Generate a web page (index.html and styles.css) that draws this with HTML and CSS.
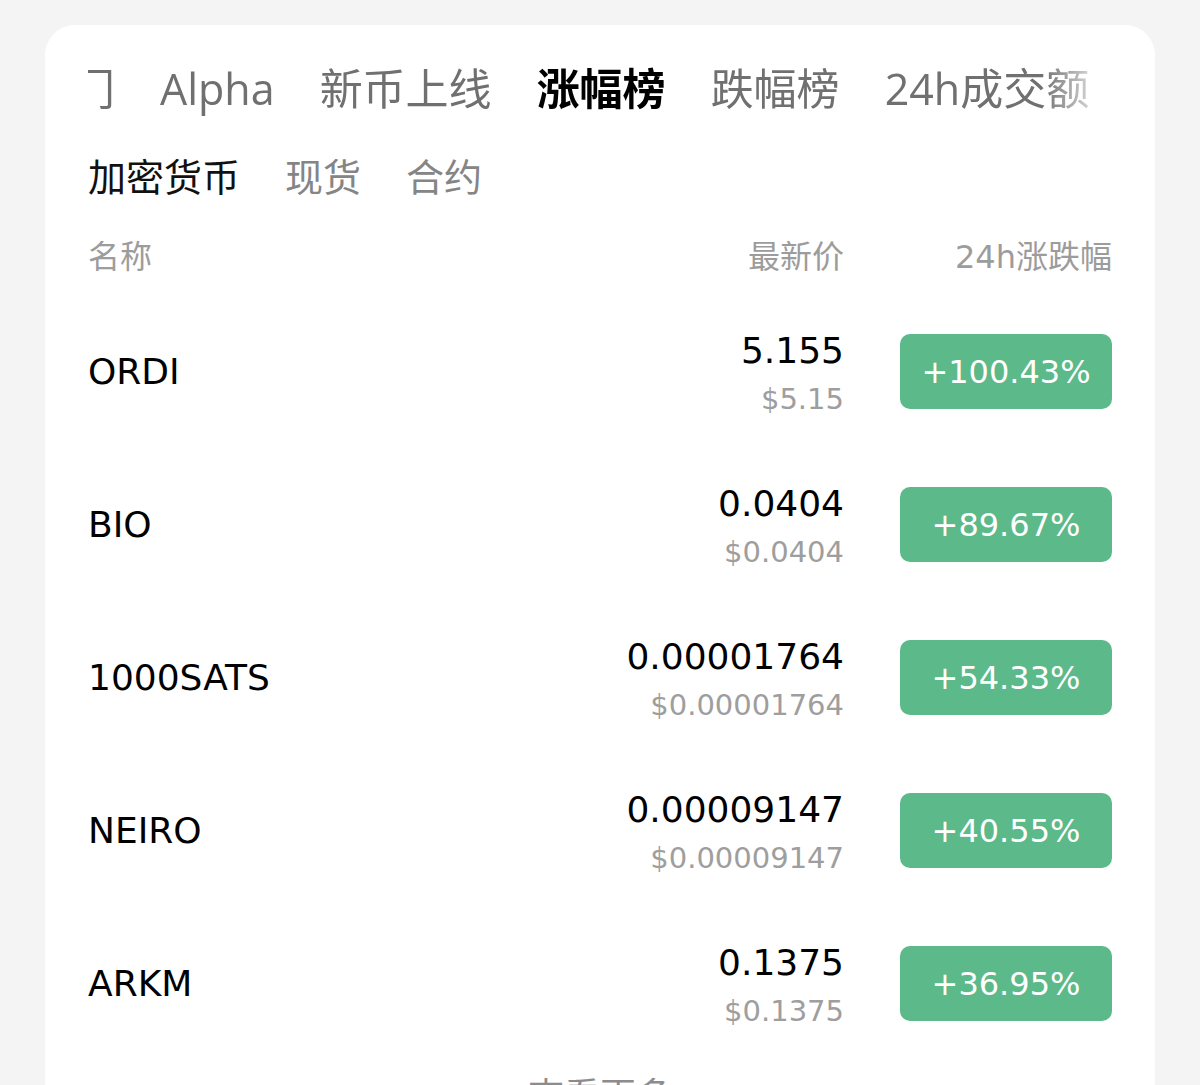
FILE: index.html
```html
<!DOCTYPE html>
<html lang="zh-CN">
<head>
    <meta charset="UTF-8">
    <meta name="viewport" content="width=device-width, initial-scale=1.0">
    <title>涨幅榜</title>
    <link rel="stylesheet" href="styles.css">
</head>
<body>

    <div class="card">
        <!-- 顶部分类 -->
        <div class="tabs">
            <span class="tab tab-scrolled">热门</span>
            <span class="tab">Alpha</span>
            <span class="tab">新币上线</span>
            <span class="tab active">涨幅榜</span>
            <span class="tab">跌幅榜</span>
            <span class="tab">24h成交额</span>
        </div>

        <div class="sub-tabs">
            <span class="sub-tab active">加密货币</span>
            <span class="sub-tab">现货</span>
            <span class="sub-tab">合约</span>
        </div>

        <div class="list-head">
            <span>名称</span>
            <span class="col-price">最新价</span>
            <span class="col-change">24h涨跌幅</span>
        </div>

        <div class="list">
            <div class="row">
                <span class="name">ORDI</span>
                <div class="price">
                    <span class="last">5.155</span>
                    <span class="usd">$5.15</span>
                </div>
                <span class="change">+100.43%</span>
            </div>
            <div class="row">
                <span class="name">BIO</span>
                <div class="price">
                    <span class="last">0.0404</span>
                    <span class="usd">$0.0404</span>
                </div>
                <span class="change">+89.67%</span>
            </div>
            <div class="row">
                <span class="name">1000SATS</span>
                <div class="price">
                    <span class="last">0.00001764</span>
                    <span class="usd">$0.00001764</span>
                </div>
                <span class="change">+54.33%</span>
            </div>
            <div class="row">
                <span class="name">NEIRO</span>
                <div class="price">
                    <span class="last">0.00009147</span>
                    <span class="usd">$0.00009147</span>
                </div>
                <span class="change">+40.55%</span>
            </div>
            <div class="row">
                <span class="name">ARKM</span>
                <div class="price">
                    <span class="last">0.1375</span>
                    <span class="usd">$0.1375</span>
                </div>
                <span class="change">+36.95%</span>
            </div>
        </div>

        <div class="more">查看更多</div>
    </div>

</body>
</html>
```

FILE: styles.css
```css
body {
    font-family: "DejaVu Sans", "Noto Sans CJK SC", sans-serif;
    background-color: #f4f4f4;
    color: #000;
    margin: 0;
    padding: 25px 45px 0;
}

.card {
    background-color: #fff;
    border-radius: 30px;
    padding: 31px 43px 60px;
}

/* 顶部分类，横向滚动 */
.tabs {
    display: flex;
    gap: 45px;
    padding: 8px 0;
    font-family: "Open Sans", "Noto Sans CJK SC", sans-serif;
    font-size: 43px;
    line-height: 50px;
    white-space: nowrap;
    overflow: hidden;
    color: #707070;
    -webkit-mask-image: linear-gradient(to right, #000 calc(100% - 70px), transparent);
    mask-image: linear-gradient(to right, #000 calc(100% - 70px), transparent);
}

.tab {
    flex-shrink: 0;
}

.tab-scrolled {
    margin-left: -59px;
}

.tab.active {
    color: #000;
    font-weight: bold;
}

.sub-tabs {
    display: flex;
    gap: 45px;
    margin-top: 31px;
    font-size: 38px;
    line-height: 50px;
    color: #858585;
}

.sub-tab.active {
    color: #111;
}

.list-head {
    display: grid;
    grid-template-columns: 1fr auto 212px;
    column-gap: 56px;
    margin-top: 34px;
    font-size: 32px;
    line-height: 40px;
    color: #9c9c9c;
}

.col-price,
.col-change {
    text-align: right;
}

.list {
    margin-top: 18px;
}

.row {
    display: grid;
    grid-template-columns: 1fr auto 212px;
    column-gap: 56px;
    align-items: center;
    height: 153px;
}

.name {
    font-size: 36px;
}

.price {
    display: flex;
    flex-direction: column;
    align-items: flex-end;
    padding-top: 8px;
}

.last {
    font-size: 36px;
    line-height: 46px;
}

.usd {
    font-size: 29px;
    line-height: 50px;
    color: #9e9e9e;
}

.change {
    height: 75px;
    border-radius: 10px;
    background-color: #5cb98a;
    color: #fff;
    font-size: 32px;
    display: flex;
    align-items: center;
    justify-content: center;
}

.more {
    text-align: center;
    font-size: 36px;
    line-height: 50px;
    margin-top: 12px;
    color: #8c8c8c;
}
```
